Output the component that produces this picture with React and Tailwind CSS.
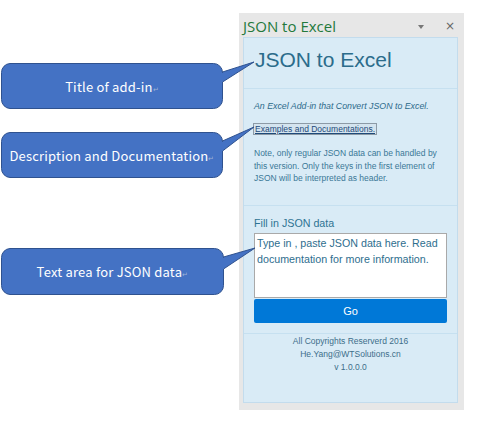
import React from "react";

function Callout({ className, w, h, tailTop, tailBottom, tip, children }) {
  const r = 9;
  const x2 = w - 0.5;
  const y2 = h - 0.5;
  const d = `M${r},0.5 H${x2 - r} A${r},${r} 0 0 1 ${x2},${r + 0.5} V${tailTop} L${tip[0]},${tip[1]} L${x2},${tailBottom} V${y2 - r} A${r},${r} 0 0 1 ${x2 - r},${y2} H${r} A${r},${r} 0 0 1 0.5,${y2 - r} V${r + 0.5} A${r},${r} 0 0 1 ${r},0.5 Z`;
  return (
    <div className={`absolute flex items-center justify-center ${className}`}>
      <svg className="absolute left-0 top-0 overflow-visible" width={w} height={h}>
        <path d={d} fill="#4472c4" stroke="#2f528f" strokeWidth="1" />
      </svg>
      <span className="relative text-white text-[13px] tracking-[0.2px] font-['Noto_Sans_CJK_SC','Noto_Sans',sans-serif] leading-none whitespace-nowrap">
        {children}
        <span className="text-[7px] text-[#9fb3d6] align-baseline">↵</span>
      </span>
    </div>
  );
}

export default function App() {
  return (
    <div className="relative w-[480px] h-[425px] bg-white overflow-hidden flex items-start font-['Liberation_Sans',Arial,sans-serif]">
      <Callout className="left-[1px] top-[63px] w-[222px] h-[46px]" w={222} h={46} tailTop={9} tailBottom={19} tip={[253, -1]}>
        Title of add-in
      </Callout>
      <Callout className="left-[1px] top-[132px] w-[222px] h-[46px]" w={222} h={46} tailTop={9} tailBottom={19} tip={[253, -5]}>
        Description and Documentation
      </Callout>
      <Callout className="left-[1px] top-[248px] w-[223px] h-[47px]" w={223} h={47} tailTop={9} tailBottom={21} tip={[254, 0]}>
        Text area for JSON data
      </Callout>

      <div className="ml-[239px] mt-[13px] w-[225px] h-[397px] bg-[#e7e7e7] flex flex-col">
        <div className="h-[24px] flex items-center pl-[4px] pr-[9px]">
          <span className="text-[15px] leading-none text-[#23793b] font-['Open_Sans',sans-serif] pt-[2px]">JSON to Excel</span>
          <span className="ml-auto mr-[21px] mt-[3px] w-0 h-0 border-l-[3px] border-r-[3px] border-t-[4px] border-l-transparent border-r-transparent border-t-[#777]"></span>
          <span className="text-[12px] leading-none text-[#666] font-['DejaVu_Sans',sans-serif] mt-[1px]">×</span>
        </div>
        <div className="ml-[4px] w-[215px] h-[366px] bg-[#d9ebf6] border border-[#c3dced] flex flex-col">
          <div className="h-[50px] pl-[11px] pt-[10px]">
            <div className="text-[21px] leading-[24px] text-[#2b6c8b]">JSON to Excel</div>
          </div>
          <div className="h-[117px] border-t border-[#c6e0f0] px-[10px] pt-[11px] text-[8.5px]">
            <div className="italic text-[8.8px] leading-[12px] whitespace-nowrap text-[#2c6a8a]">An Excel Add-in that Convert JSON to Excel.</div>
            <div className="mt-[11px] leading-[12px]">
              <span className="text-[#1e4a7a] underline border border-[#8c9aa6] bg-[#d4e4ef] px-[1px] -ml-[1px]">Examples and Documentations.</span>
            </div>
            <div className="mt-[12px] leading-[12.5px] text-[#3a7896]">
              Note, only regular JSON data can be handled by this version. Only the keys in the first element of JSON will be interpreted as header.
            </div>
          </div>
          <div className="h-[128px] border-t border-[#c6e0f0] px-[10px] pt-[10px] flex flex-col">
            <div className="text-[10.7px] leading-[14px] text-[#2e7393]">Fill in JSON data</div>
            <div className="mt-[3px] h-[65px] bg-white border border-[#a9a9a9] px-[2px] pt-[1px] text-[10.7px] leading-[16px] text-[#2e6e8e]">
              Type in , paste JSON data here. Read documentation for more information.
            </div>
            <div className="mt-[1px] h-[24px] bg-[#0078d7] rounded-[2px] flex items-center justify-center text-white text-[11px]">Go</div>
          </div>
          <div className="flex-1 border-t border-[#c6e0f0] pt-[1px] flex flex-col items-center text-[8.5px] leading-[13px] text-[#3d6e8a]">
            <div>All Copyrights Reserverd 2016</div>
            <div>He.Yang@WTSolutions.cn</div>
            <div>v 1.0.0.0</div>
          </div>
        </div>
      </div>
    </div>
  );
}
